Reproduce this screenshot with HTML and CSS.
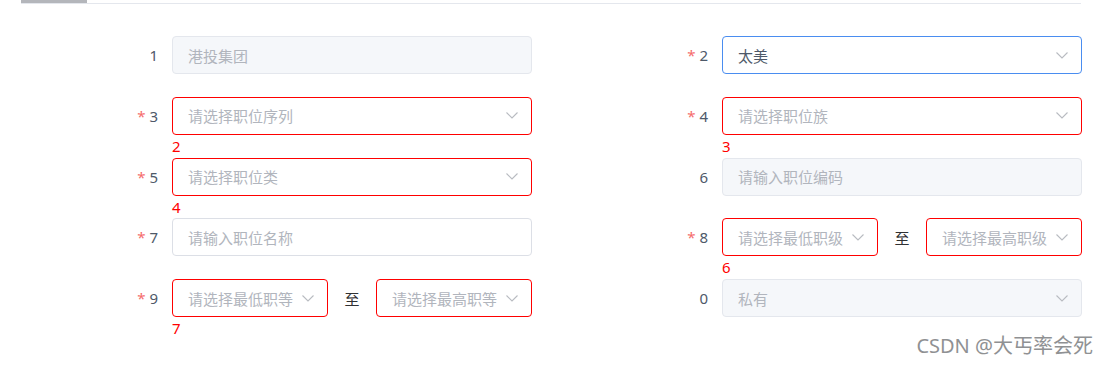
FILE: index.html
```html
<!DOCTYPE html>
<html lang="zh-CN">
<head>
    <meta charset="UTF-8">
    <meta name="viewport" content="width=device-width, initial-scale=1.0">
    <title>职位表单</title>
    <link rel="stylesheet" href="styles.css">
</head>
<body>
    <div class="tabs">
        <div class="tab-bar"></div>
    </div>

    <form class="form">
        <div class="item">
            <label class="label">1</label>
            <div class="control">
                <div class="field disabled"><span class="text">港投集团</span></div>
            </div>
        </div>
        <div class="item">
            <label class="label required">2</label>
            <div class="control">
                <div class="field focus"><span class="text value">太美</span><svg class="arrow" viewBox="0 0 12 7"><path d="M0.5 0.5 L6 6 L11.5 0.5"/></svg></div>
            </div>
        </div>

        <div class="item">
            <label class="label required">3</label>
            <div class="control">
                <div class="field error"><span class="text">请选择职位序列</span><svg class="arrow" viewBox="0 0 12 7"><path d="M0.5 0.5 L6 6 L11.5 0.5"/></svg></div>
                <div class="error-msg">2</div>
            </div>
        </div>
        <div class="item">
            <label class="label required">4</label>
            <div class="control">
                <div class="field error"><span class="text">请选择职位族</span><svg class="arrow" viewBox="0 0 12 7"><path d="M0.5 0.5 L6 6 L11.5 0.5"/></svg></div>
                <div class="error-msg">3</div>
            </div>
        </div>

        <div class="item">
            <label class="label required">5</label>
            <div class="control">
                <div class="field error"><span class="text">请选择职位类</span><svg class="arrow" viewBox="0 0 12 7"><path d="M0.5 0.5 L6 6 L11.5 0.5"/></svg></div>
                <div class="error-msg">4</div>
            </div>
        </div>
        <div class="item">
            <label class="label">6</label>
            <div class="control">
                <div class="field disabled"><span class="text">请输入职位编码</span></div>
            </div>
        </div>

        <div class="item">
            <label class="label required">7</label>
            <div class="control">
                <div class="field"><span class="text">请输入职位名称</span></div>
            </div>
        </div>
        <div class="item">
            <label class="label required">8</label>
            <div class="control">
                <div class="range">
                    <div class="field error"><span class="text">请选择最低职级</span><svg class="arrow" viewBox="0 0 12 7"><path d="M0.5 0.5 L6 6 L11.5 0.5"/></svg></div>
                    <span class="sep">至</span>
                    <div class="field error"><span class="text">请选择最高职级</span><svg class="arrow" viewBox="0 0 12 7"><path d="M0.5 0.5 L6 6 L11.5 0.5"/></svg></div>
                </div>
                <div class="error-msg">6</div>
            </div>
        </div>

        <div class="item">
            <label class="label required">9</label>
            <div class="control">
                <div class="range">
                    <div class="field error"><span class="text">请选择最低职等</span><svg class="arrow" viewBox="0 0 12 7"><path d="M0.5 0.5 L6 6 L11.5 0.5"/></svg></div>
                    <span class="sep">至</span>
                    <div class="field error"><span class="text">请选择最高职等</span><svg class="arrow" viewBox="0 0 12 7"><path d="M0.5 0.5 L6 6 L11.5 0.5"/></svg></div>
                </div>
                <div class="error-msg">7</div>
            </div>
        </div>
        <div class="item">
            <label class="label">0</label>
            <div class="control">
                <div class="field disabled"><span class="text">私有</span><svg class="arrow" viewBox="0 0 12 7"><path d="M0.5 0.5 L6 6 L11.5 0.5"/></svg></div>
            </div>
        </div>
    </form>

    <div class="watermark">CSDN @大丐率会死</div>
</body>
</html>
```

FILE: styles.css
```css
body {
    margin: 0;
    background: #fff;
    font-family: "Noto Sans", "Noto Sans CJK SC", sans-serif;
    color: #606266;
    position: relative;
    height: 367px;
    overflow: hidden;
}

/* Tabs header */
.tabs {
    width: 1060px;
    margin-left: 21px;
    height: 3px;
    border-bottom: 1px solid #e4e7ed;
}
.tabs .tab-bar {
    width: 66px;
    height: 3px;
    background-color: #b4b6bb;
}

/* Form */
.form {
    display: grid;
    grid-template-columns: 510px 510px;
    column-gap: 40px;
    row-gap: 22.75px;
    margin: 32px 0 0 22px;
}
.form .item {
    display: flex;
    height: 38px;
}
.form .item .label {
    width: 150px;
    box-sizing: border-box;
    padding-right: 14px;
    text-align: right;
    font-size: 15px;
    line-height: 38px;
    color: #4e5969;
}
.form .item .label.required::before {
    content: "*";
    color: #f56c6c;
    margin-right: 4px;
}
.form .item .control {
    flex: 1;
    position: relative;
}
.form .item .error-msg {
    position: absolute;
    top: 100%;
    left: 0;
    padding-top: 4px;
    font-size: 15px;
    line-height: 1;
    color: #ff0000;
}

/* Fields */
.field {
    display: flex;
    align-items: center;
    height: 38px;
    box-sizing: border-box;
    padding: 0 13px 0 15px;
    border: 1px solid #dcdfe6;
    border-radius: 4px;
    background-color: #fff;
}
.field .text {
    flex: 1;
    font-size: 15px;
    color: #b1b5bd;
    white-space: nowrap;
    overflow: hidden;
}
.field .text.value {
    color: #4e5969;
}
.field .arrow {
    width: 12px;
    height: 7px;
    fill: none;
    stroke: #b8bbc1;
    stroke-width: 1.1;
}
.field.disabled {
    background-color: #f5f7fa;
    border-color: #e4e7ed;
}
.field.focus {
    border-color: #4a8df0;
}
.field.error {
    border-color: #ff0000;
}

.range {
    display: flex;
    align-items: center;
}
.range .field {
    flex: 1;
}
.range .sep {
    width: 48px;
    text-align: center;
    font-size: 15px;
    color: #303133;
}

.watermark {
    position: absolute;
    right: 14px;
    bottom: 8px;
    font-size: 20px;
    color: #8f9193;
    text-shadow: 0 0 1px #fff;
}
```
